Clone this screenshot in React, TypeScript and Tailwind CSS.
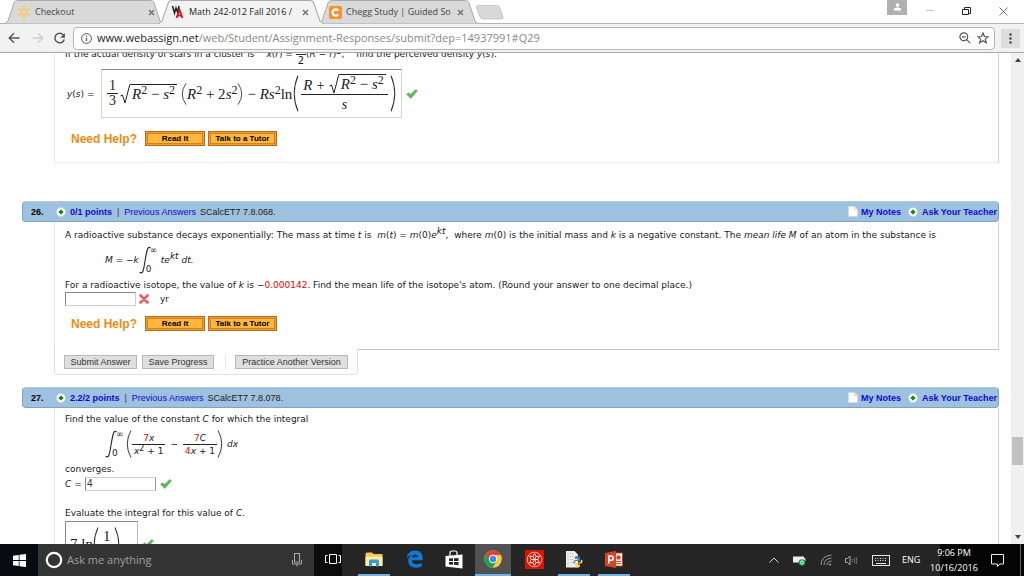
import type { ReactNode } from "react";

function Tab({ icon, title, size, active, label }: { icon: ReactNode; title: string; size: string; active?: boolean; label: string }) {
  return (
    <div className={`relative -ml-1 flex h-full shrink-0 items-center ${size} ${active ? "z-10" : ""}`}>
      <svg className="absolute inset-0 h-full w-full" viewBox="0 0 160 24" preserveAspectRatio="none" aria-hidden="true">
        <path d="M0 24 L3 21 L9 3 Q10 0.5 13 0.5 L147 0.5 Q150 0.5 151 3 L157 21 L160 24 Z" fill={active ? "#f2f2f2" : "#d9d9d9"} stroke="#a9a9a9" strokeWidth="1" />
        {active && <path d="M1 23.6 H159" stroke="#f2f2f2" strokeWidth="2" />}
      </svg>
      <button role="tab" aria-selected={!!active} className="relative flex min-w-0 flex-1 items-center gap-1 text-left">
        {icon}
        <span className={`whitespace-nowrap text-[9px] leading-4 ${active ? "text-[#222]" : "text-[#444]"}`}>{title}</span>
      </button>
      <button aria-label={label} className="relative ml-1">
        <svg width="7" height="7" viewBox="0 0 7 7"><path d="M1 1 L6 6 M6 1 L1 6" stroke="#666" strokeWidth="1.1" /></svg>
      </button>
    </div>
  );
}

function Spark() {
  return (
    <svg className="shrink-0" width="14" height="14" viewBox="0 0 14 14" stroke="#fdc85c" strokeWidth="1.9" strokeLinecap="round">
      <path d="M7 1 V4.6 M7 9.4 V13 M1.8 4 L4.9 5.8 M9.1 8.2 L12.2 10 M1.8 10 L4.9 8.2 M9.1 5.8 L12.2 4" />
    </svg>
  );
}

function WaLogo() {
  return (
    <svg className="shrink-0" width="14" height="14" viewBox="0 0 14 14" fill="none">
      <path d="M1.500 1 L3.500 8 L5 3 L6.500 7 L8 1" stroke="#222" strokeWidth="1.5" />
      <path d="M5.500 13 L8.500 5 L11.500 13 M6.800 10.6 H10.500" stroke="#cf1420" strokeWidth="1.9" />
    </svg>
  );
}

function CheggLogo() {
  return (
    <svg className="shrink-0" width="13" height="13" viewBox="0 0 13 13">
      <rect width="13" height="13" rx="2" fill="#f59331" />
      <path d="M9.3 4.6 A3.2 3.2 0 1 0 9.3 8.4" stroke="#fff" strokeWidth="2.3" fill="none" />
    </svg>
  );
}

function TabStrip() {
  return (
    <header className="relative flex h-6 shrink-0 items-start bg-white pl-[9px]">
      <div className="absolute inset-x-0 bottom-0 h-px bg-[#b4b4b4]" />
      <div role="tablist" className="flex h-full">
        <Tab icon={<Spark />} title="Checkout" size="w-[158px] pl-3 pr-2" label="Close Checkout" />
        <Tab icon={<WaLogo />} title="Math 242-012 Fall 2016 /" size="w-[164px] pl-3 pr-[14px]" active label="Close Math" />
        <Tab icon={<CheggLogo />} title="Chegg Study | Guided So" size="w-[159px] pl-[10px] pr-[14px]" label="Close Chegg" />
      </div>
      <button aria-label="New tab" className="-ml-0.5 mt-[5px]">
        <svg width="28" height="15" viewBox="0 0 28 15"><path d="M2 .5 H21 Q23 .5 24 3 L27 12 Q27.500 14 25 14 H7 Q5 14 4 12 L.6 3 Q0 .5 2 .5Z" fill="#d8d8d8" stroke="#c2c2c2" strokeWidth=".8" /></svg>
      </button>
      <div className="ml-auto flex h-full items-start pr-4">
        <button aria-label="Profile" className="mr-[19px] flex h-[15px] w-5 justify-center bg-[#b0b0b0] pt-[3px]">
          <svg width="7" height="8" viewBox="0 0 7 8" fill="#fff"><circle cx="3.500" cy="2" r="1.8" /><path d="M0 7.500 V6 Q0 4.500 3.500 4.500 T7 6 V7.500Z" /></svg>
        </button>
        <button aria-label="Minimize" className="mr-[28px] mt-[10px]"><svg width="8" height="2"><path d="M0 .5 H8" stroke="#c4c4c4" /></svg></button>
        <button aria-label="Restore" className="mr-[28px] mt-[7px]">
          <svg width="9" height="9" viewBox="0 0 9 9" fill="none" stroke="#222"><path d="M.5 2.500 H6.500 V7.500 H.5Z M2.500 2 V.5 H8.500 V6.500 H7" /></svg>
        </button>
        <button aria-label="Close window" className="mt-[7px]"><svg width="9" height="9" viewBox="0 0 9 9"><path d="M.5 .5 L8.500 8.500 M8.500 .5 L.5 8.500" stroke="#777" /></svg></button>
      </div>
    </header>
  );
}

function Toolbar() {
  return (
    <div className="flex h-[29px] shrink-0 items-center border-b border-[#a8a8a8] bg-[#f2f2f2] pl-2 pr-1">
      <button aria-label="Back" className="w-6"><svg width="12" height="12" viewBox="0 0 12 12" fill="none" stroke="#555" strokeWidth="1.4"><path d="M11.500 6 H1.500 M6 1.200 L1.200 6 L6 10.800" /></svg></button>
      <button aria-label="Forward" className="w-[21px]"><svg width="12" height="12" viewBox="0 0 12 12" fill="none" stroke="#d0d0d0" strokeWidth="1.4"><path d="M.5 6 H10.500 M6 1.200 L10.800 6 L6 10.800" /></svg></button>
      <button aria-label="Reload" className="w-5"><svg width="13" height="13" viewBox="0 0 13 13" fill="none"><path d="M10.600 3.200 A4.800 4.800 0 1 0 11.300 7.500" stroke="#555" strokeWidth="1.5" /><path d="M11.900 1 V5.700 H7.200Z" fill="#555" /></svg></button>
      <div className="flex h-[23px] min-w-0 flex-1 items-center rounded-sm border border-[#b4b4b4] bg-white pl-[7px] pr-[5px]">
        <svg className="shrink-0" width="11" height="11" viewBox="0 0 11 11" fill="none" stroke="#555"><circle cx="5.500" cy="5.500" r="4.900" /><path d="M5.500 4.800 V8.300 M5.500 2.500 V3.700" strokeWidth="1.200" /></svg>
        <div className="ml-[5px] min-w-0 flex-1 whitespace-nowrap text-[11px] leading-4 text-[#888]"><span className="text-[#222]">www.webassign.net</span>/web/Student/Assignment-Responses/submit?dep=14937991#Q29</div>
        <button aria-label="Zoom"><svg width="12" height="12" viewBox="0 0 12 12" fill="none" stroke="#555" strokeWidth="1.200"><circle cx="4.800" cy="4.800" r="3.900" /><path d="M7.700 7.700 L11.200 11.200 M3 4.800 H6.600" /></svg></button>
        <button aria-label="Bookmark" className="ml-[6px]"><svg width="12" height="12" viewBox="0 0 12 12" fill="none" stroke="#555" strokeWidth="1.200"><path d="M6 1 L7.400 4.500 L11.200 4.700 L8.300 7.100 L9.300 10.800 L6 8.700 L2.700 10.800 L3.700 7.100 L.8 4.700 L4.600 4.500Z" /></svg></button>
      </div>
      <button aria-label="Menu" className="ml-[6px] flex h-[19px] w-[19px] items-center justify-center bg-[#dedede]"><svg width="3" height="11" viewBox="0 0 3 11" fill="#444"><circle cx="1.500" cy="1.500" r="1.200" /><circle cx="1.500" cy="5.500" r="1.200" /><circle cx="1.500" cy="9.500" r="1.200" /></svg></button>
    </div>
  );
}

function Check() {
  return <svg className="shrink-0" width="12" height="10" viewBox="0 0 12 10" role="img" aria-label="Correct"><path d="M.6 5.300 L2.800 3.700 L4.500 5.500 L9.800 .5 L11.500 1.800 L4.800 9.500Z" fill="#5fba5f" stroke="#4a9e4b" strokeWidth=".5" /></svg>;
}

function Cross() {
  return <svg className="shrink-0" width="10" height="10" viewBox="0 0 10 10" role="img" aria-label="Incorrect"><path d="M1.500 1.500 L8.500 8.500 M8.500 1.500 L1.500 8.500" stroke="#f35a5a" strokeWidth="2.600" strokeLinecap="round" /></svg>;
}

function NeedHelp() {
  const cls = "h-[15px] border border-[#b86a1a] bg-[#ffb83d] font-bold text-[8px] leading-[9px] text-black shadow-[inset_0_0_0_1px_#f79a2c,inset_0_0_0_2px_#cf8222] font-['Liberation_Sans',sans-serif]";
  return (
    <div className="ml-[6px] flex h-[15px] items-center">
      <span className="w-[74px] font-['Liberation_Sans',sans-serif] text-[12px] font-bold leading-4 text-[#f08a14]">Need Help?</span>
      <button className={`w-[60px] ${cls}`}>Read It</button>
      <button className={`ml-[3px] w-[69px] ${cls}`}>Talk to a Tutor</button>
    </div>
  );
}

function Plus() {
  return <svg className="shrink-0" width="10" height="10" viewBox="0 0 10 10" aria-hidden="true"><circle cx="5" cy="5" r="4.500" fill="#fff" stroke="#c6d2d8" strokeWidth=".7" /><path d="M5 2.800 V7.200 M2.800 5 H7.200" stroke="#0a8a0a" strokeWidth="1.800" /></svg>;
}

function QuestionHeader({ num, points, code }: { num: string; points: string; code: string }) {
  return (
    <div className="flex h-[21px] items-center rounded-sm border border-[#7fa3c0] border-t-[#b4c8d8] bg-[#9dc1de] pl-2 pr-px font-['Liberation_Sans',sans-serif] text-[9px] leading-3 whitespace-nowrap text-[#0b0bd0]">
      <h2 className="w-[25px] font-bold text-black">{num}</h2>
      <Plus />
      <a href="#points" className="ml-1 font-bold">{points}</a>
      <span className="mx-[5px] text-[#551a8b]">|</span>
      <a href="#previous">Previous Answers</a>
      <span className="ml-1 text-[#222]">{code}</span>
      <div className="ml-auto flex items-center font-bold">
        <svg width="10" height="11" viewBox="0 0 10 11" aria-hidden="true"><path d="M.5 .5 H6.500 L9.500 3.500 V10.500 H.5Z" fill="#fff" stroke="#d4dbe0" strokeWidth=".8" /><path d="M6.500 .5 V3.500 H9.500" fill="#e8e8e8" stroke="#ccc" strokeWidth=".6" /></svg>
        <a href="#notes" className="ml-[3px] mr-[7px]">My Notes</a>
        <Plus />
        <a href="#teacher" className="ml-1">Ask Your Teacher</a>
      </div>
    </div>
  );
}

function Paren({ right, height }: { right?: boolean; height: string }) {
  return (
    <svg className={`w-[6px] shrink-0 ${height}`} viewBox="0 0 6 30" preserveAspectRatio="none" role="img" aria-label={right ? ")" : "("}>
      <path d={right ? "M1 .5 Q8.500 15 1 29.500" : "M5 .5 Q-2.500 15 5 29.500"} fill="none" stroke="#333" strokeWidth="1" />
    </svg>
  );
}

function Sqrt({ children }: { children: ReactNode }) {
  return (
    <span className="flex items-stretch">
      <svg className="w-[10px]" viewBox="0 0 10 20" preserveAspectRatio="none" aria-hidden="true"><path d="M.5 12 L2.500 11 L5 19 L9.800 .5" fill="none" stroke="#222" strokeWidth="1" /></svg>
      <span className="border-t border-[#222] px-[2px]">{children}</span>
    </span>
  );
}

function Frac({ top, bottom, wide }: { top: ReactNode; bottom: ReactNode; wide?: boolean }) {
  return (
    <span className="flex flex-col items-center">
      <span className={`flex justify-center self-stretch border-b border-[#222] ${wide ? "px-1" : "px-[2px]"}`}>{top}</span>
      <span className={wide ? "px-[2px]" : ""}>{bottom}</span>
    </span>
  );
}

function Sup({ children }: { children: ReactNode }) {
  return <sup className="relative -top-[5px] align-baseline text-[12px] leading-none not-italic">{children}</sup>;
}

function Integral() {
  return (
    <span className="flex h-[28px] items-stretch">
      <svg width="12" height="28" viewBox="0 0 12 28" role="img" aria-label="Integral"><path d="M11.500 2 Q9.500 0 8.200 4 Q7 9 6 15 Q5 22 4 25 Q2.800 28 .7 26.300" fill="none" stroke="#222" strokeWidth="1.100" /></svg>
      <span className="-ml-1 flex w-3 flex-col justify-between text-[9px] leading-[9px]"><span className="ml-[3px]">∞</span><span className="-ml-px">0</span></span>
    </span>
  );
}

function Question25() {
  return (
    <article className="ml-8 border-x border-b border-[#ececec] border-r-[#d2d2d2] pb-4 pl-[10px]">
      <div className="-mt-[10px] flex h-[22px] items-center whitespace-nowrap">
        <span>If the actual density of stars in a cluster is</span>
        <span className="ml-3"><i>x</i>(<i>r</i>) =&nbsp;</span>
        <span className="text-[10px] leading-[12px]"><Frac top="1" bottom="2" /></span>
        <span>(<i>R</i> − <i>r</i>)<sup className="relative -top-[3px] align-baseline text-[8px] leading-none">2</sup>,</span>
        <span className="ml-3">find the perceived density <i>y</i>(<i>s</i>).</span>
      </div>
      <div className="mt-1 flex items-center">
        <span className="w-9 pl-[2px] whitespace-nowrap"><i>y</i>(<i>s</i>) =</span>
        <div className="flex h-[49px] w-[301px] items-center border border-[#d4d4d4] border-t-[#888] pl-[5px] font-['Liberation_Serif',serif] text-[15px] leading-[18px] whitespace-nowrap text-[#222]">
          <span className="text-[14px] leading-[14px]"><Frac top="1" bottom="3" /></span>
          <span className="ml-[2px]"><Sqrt><i>R</i><Sup>2</Sup> − <i>s</i><Sup>2</Sup></Sqrt></span>
          <span className="ml-1 flex items-center"><Paren height="h-[22px]" /><span><i>R</i><Sup>2</Sup> + 2<i>s</i><Sup>2</Sup></span><Paren right height="h-[22px]" /></span>
          <span className="ml-1">− <i>Rs</i><Sup>2</Sup>ln</span>
          <span className="ml-px flex items-center gap-[2px]">
            <Paren height="h-[37px]" />
            <Frac top={<><span className="mr-1 pt-[2px]"><i>R</i> +</span><Sqrt><i>R</i><Sup>2</Sup> − <i>s</i><Sup>2</Sup></Sqrt></>} bottom={<i className="text-[14px] leading-[14px]">s</i>} />
            <Paren right height="h-[37px]" />
          </span>
        </div>
        <span className="ml-1"><Check /></span>
      </div>
      <div className="mt-[13px]"><NeedHelp /></div>
    </article>
  );
}

function Question26() {
  const button = "h-[14px] border border-[#b9b9b9] bg-[#dfdfdf] font-['Liberation_Sans',sans-serif] text-[9px] leading-3 text-[#333] whitespace-nowrap";
  return (
    <article className="mt-[38px]">
      <QuestionHeader num="26." points="0/1 points" code="SCalcET7 7.8.068." />
      <div className="ml-8 border-x border-[#e4e4e4] border-r-[#d2d2d2] pb-[18px] pl-[10px] pt-[6px]">
        <p className="whitespace-nowrap">A radioactive substance decays exponentially: The mass at time <i>t</i> is &nbsp;<i>m</i>(<i>t</i>) = <i>m</i>(0)<i>e</i><sup className="relative -top-1 align-baseline text-[9px] leading-none italic">kt</sup>, &nbsp;where <i>m</i>(0) is the initial mass and <i>k</i> is a negative constant. The <i>mean life M</i> of an atom in the substance is</p>
        <div className="mt-1 flex h-7 items-center pl-10">
          <span><i>M</i> = −<i>k</i></span><Integral />
          <i className="ml-[2px]">te<sup className="relative -top-1 align-baseline text-[9px] leading-none">kt</sup> dt.</i>
        </div>
        <p className="mt-1">For a radioactive isotope, the value of <i>k</i> is −<span className="text-[#f00000]">0.000142</span>. Find the mean life of the isotope's atom. (Round your answer to one decimal place.)</p>
        <div className="flex h-[14px] items-center">
          <input aria-label="Mean life in years" className="h-[14px] w-[71px] border border-[#d0d0d0] border-l-[#888] border-t-[#888] bg-white px-px" />
          <span className="ml-[3px]"><Cross /></span><span className="ml-[11px]">yr</span>
        </div>
        <div className="mt-[10px]"><NeedHelp /></div>
      </div>
      <div className="ml-8 flex">
        <div className="flex h-[26px] items-start rounded-b border-x border-b border-[#e0e0e0] pl-[9px] pr-[9px] pt-[6px]">
          <button className={`w-[73px] ${button}`}>Submit Answer</button>
          <button className={`ml-[5px] w-[72px] ${button}`}>Save Progress</button>
          <span className="ml-[11px] h-[14px] border-l border-[#e4e4e4]" />
          <button className={`ml-[9px] w-[113px] ${button}`}>Practice Another Version</button>
        </div>
        <div className="h-px flex-1 bg-[#c6c6c6]" />
      </div>
    </article>
  );
}

function Question27() {
  return (
    <article className="mt-3">
      <QuestionHeader num="27." points="2.2/2 points" code="SCalcET7 7.8.078." />
      <div className="ml-8 border-x border-[#e4e4e4] border-r-[#d2d2d2] pb-8 pl-[10px] pt-1">
        <p>Find the value of the constant <i>C</i> for which the integral</p>
        <div className="mt-1 flex h-7 items-center pl-10 leading-3 whitespace-nowrap">
          <Integral />
          <span className="ml-px flex"><Paren height="h-7" /></span>
          <Frac wide top={<span><span className="text-[#f00000]">7</span><i>x</i></span>} bottom={<><i>x</i><sup className="relative -top-[3px] align-baseline text-[8px] leading-none">2</sup> + 1</>} />
          <span className="mx-[5px]">−</span>
          <Frac wide top={<span className="text-[#f00000]">7<i className="text-[#222]">C</i></span>} bottom={<><span className="text-[#f00000]">4</span><i>x</i> + 1</>} />
          <Paren right height="h-7" />
          <i className="ml-1">dx</i>
        </div>
        <p className="mt-1">converges.</p>
        <div className="mt-px flex h-[14px] items-center">
          <label htmlFor="answer-c" className="w-5"><i>C</i> =</label>
          <input id="answer-c" defaultValue="4" className="h-[14px] w-[71px] border border-[#d0d0d0] border-l-[#888] border-r-[#999] bg-white px-px font-['Liberation_Sans',sans-serif] text-[10px] text-[#333]" />
          <span className="ml-1"><Check /></span>
        </div>
        <p className="mt-[15px]">Evaluate the integral for this value of <i>C</i>.</p>
        <div className="mt-px flex items-center">
          <div className="flex h-[46px] w-[73px] items-center border border-[#bbb] border-l-[#888] border-t-[#888] pl-1 font-['Liberation_Serif',serif] text-[15px] leading-4 text-[#222]">
            <span>7 ln</span><Paren height="h-[34px]" /><Frac wide top="1" bottom="4" /><Paren right height="h-[34px]" />
          </div>
          <span className="ml-1"><Check /></span>
        </div>
      </div>
    </article>
  );
}

function Scrollbar() {
  return (
    <div className="flex w-[13px] shrink-0 flex-col items-center bg-[#f0f0f0]" aria-hidden="true">
      <svg className="mt-[5px]" width="6" height="4"><path d="M0 4 L3 0 L6 4Z" fill="#444" /></svg>
      <div className="grow-[375]" />
      <div className="h-7 w-[11px] bg-[#c1c1c1]" />
      <div className="grow-[70]" />
      <svg className="mb-[5px]" width="6" height="4"><path d="M0 0 L3 4 L6 0Z" fill="#444" /></svg>
    </div>
  );
}

function TaskItem({ label, active, open, width, children }: { label: string; active?: boolean; open?: boolean; width: string; children: ReactNode }) {
  return (
    <button aria-label={label} className={`flex h-full shrink-0 items-center justify-center border-b-2 ${width} ${active ? "bg-[#525252]" : ""} ${open ? "border-[#76b0dc]" : "border-transparent"}`}>
      {children}
    </button>
  );
}

function Taskbar() {
  return (
    <footer className="flex h-8 shrink-0 items-stretch bg-[#252525] text-white">
      <button aria-label="Start" className="flex w-[38px] items-center justify-center bg-[#080b0f]">
        <svg width="13" height="13" viewBox="0 0 13 13" fill="#fff"><path d="M0 1.700 L5.700 .9 V6.100 H0Z M6.500 .8 L13 0 V6.100 H6.500Z M0 6.900 H5.700 V12.100 L0 11.300Z M6.500 6.900 H13 V13 L6.500 12.200Z" /></svg>
      </button>
      <label className="flex w-[276px] items-center bg-[#343434] pl-[7px] pr-3">
        <svg width="18" height="18" viewBox="0 0 18 18"><circle cx="9" cy="9" r="7.200" fill="none" stroke="#fff" strokeWidth="2.200" /></svg>
        <input aria-label="Search" placeholder="Ask me anything" className="ml-1 w-0 flex-1 bg-transparent text-[11px] leading-4 text-white placeholder:text-[#a0a0a0]" />
        <svg width="10" height="14" viewBox="0 0 10 14" fill="none" stroke="#aaa"><rect x="2.500" y=".5" width="5" height="8.500" /><path d="M.5 7 V11 H9.500 V7 M5 11 V13.500" /></svg>
      </label>
      <div className="flex h-full">
        <div className="flex w-7 bg-[#0c0c0c]">
          <TaskItem label="Task view" width="w-[38px]">
            <svg width="16" height="10" viewBox="0 0 16 10" fill="none" stroke="#fff"><path d="M4.500 .5 H11.500 V9.500 H4.500Z M2.500 1.500 H.5 V8.500 H2.500 M13.500 1.500 H15.500 V8.500 H13.500" /></svg>
          </TaskItem>
        </div>
        <span className="w-4" />
        <TaskItem label="File Explorer" open width="w-8">
          <svg width="18" height="15" viewBox="0 0 18 15"><path d="M.5 2 Q.5 .5 2 .5 H7 L8.500 2 H17.500 V13 H.5Z" fill="#f6c85c" /><path d="M.5 4.500 H17.500 V14 H.5Z" fill="#ffe9a6" /><path d="M4 14.500 V9 Q4 7.500 5.500 7.500 H12.500 Q14 7.500 14 9 V14.500 H11 V11 H7 V14.500Z" fill="#3598db" /></svg>
        </TaskItem>
        <span className="w-2" />
        <TaskItem label="Edge" width="w-8">
          <svg width="17" height="18" viewBox="0 0 17 18"><path d="M.5 8.500 Q2 .5 9 .5 Q16.500 .7 16.500 8 V10.300 H5.800 Q6 14.200 10.500 14.200 Q13.500 14.200 15.700 12.900 V16.400 Q13.300 17.700 10 17.700 Q2.200 17.500 2.200 10.500 Q2.200 7 5.700 4.800 Q2.800 5 .5 8.500Z M5.900 7.200 H11.900 Q11.800 4.400 9.100 4.400 Q6.400 4.400 5.900 7.200Z" fill="#0c7bd9" fillRule="evenodd" /></svg>
        </TaskItem>
        <span className="w-2" />
        <TaskItem label="Store" width="w-8">
          <svg width="18" height="19" viewBox="0 0 18 19"><path d="M.5 6 L17.500 4.500 V18.500 L.5 16.500Z" fill="#fff" /><path d="M5 6 V3 Q5 1 7 1 H10 Q12 1 12 3 V5" fill="none" stroke="#fff" strokeWidth="1.200" /><path d="M4 8.600 L8 8.300 V11 H4Z M9 8.200 L13.500 7.900 V11 H9Z M4 12 H8 V14.700 L4 14.400Z M9 12 H13.500 V15.200 L9 14.800Z" fill="#252525" /></svg>
        </TaskItem>
        <span className="w-[5px]" />
        <TaskItem label="Chrome" active open width="w-9">
          <svg width="18" height="18" viewBox="0 0 18 18"><circle cx="9" cy="9" r="8.800" fill="#f7cd2e" /><path d="M1.400 4.500 A8.800 8.800 0 0 0 8.500 17.800 L12.700 11 L9 9Z" fill="#1fa05a" /><path d="M1.400 4.500 A8.800 8.800 0 0 1 16.800 5 H9 L5.500 11Z" fill="#dc4437" /><circle cx="9" cy="9" r="4.200" fill="#fff" /><circle cx="9" cy="9" r="3.200" fill="#4486f5" /></svg>
        </TaskItem>
        <span className="w-[7px]" />
        <TaskItem label="Mathematica" width="w-8">
          <svg width="19" height="19" viewBox="0 0 19 19"><rect width="19" height="19" fill="#dd1100" /><circle cx="9.500" cy="9.500" r="7.300" fill="none" stroke="#f6c2bd" /><path d="M9.500 3.500 L11 6.500 L14.500 6 L12.800 9.500 L14.500 13 L11 12.500 L9.500 15.500 L8 12.500 L4.500 13 L6.200 9.500 L4.500 6 L8 6.500Z M6.200 9.500 H12.800 M8 6.500 L11 12.500 M11 6.500 L8 12.500" fill="none" stroke="#fff" strokeWidth=".9" /></svg>
        </TaskItem>
        <span className="w-2" />
        <TaskItem label="Python editor" open width="w-8">
          <svg width="18" height="19" viewBox="0 0 18 19"><path d="M1 1 H9.500 L13 4.500 V17.500 H1Z" fill="#eee" /><path d="M3 3 V16 M5 3.500 H9 M5 6.500 H10 M5 9.500 H9 M5 12.500 H8" stroke="#aaa" strokeWidth=".8" strokeDasharray="1 1" /><path d="M8.500 12 Q8.500 10 10.500 10 H12.500 V9 H10 V7.500 Q10 6 12.300 6 Q15 6 15 7.700 V11 H11 Q9.500 11 9.500 14 Q8 14 8.500 12Z" fill="#3f7fb5" /><path d="M17.500 11 Q17.500 13.500 15.500 13.500 H13 V14.500 H15 V16 Q15 17.500 12.500 17.500 Q10.300 17.500 10.300 15.800 V12.500 H14.500 Q16 12.200 16 9.700 Q17.500 9.500 17.500 11Z" fill="#ffd94b" /></svg>
        </TaskItem>
        <span className="w-2" />
        <TaskItem label="PowerPoint" open width="w-8">
          <svg width="18" height="17" viewBox="0 0 18 17"><rect x="9" y="2" width="8.500" height="13" fill="#fff" stroke="#c83f20" /><path d="M11 10.500 H16 M11 12.500 H16" stroke="#d24625" /><circle cx="13.500" cy="6.500" r="2.200" fill="#d24625" /><path d="M0 2 L11 0 V17 L0 15Z" fill="#d24625" /><path d="M3.900 12.500 V5 H6 Q8.200 5 8.200 7.200 Q8.200 9.300 6 9.300 H4" stroke="#fff" strokeWidth="1.500" fill="none" /></svg>
        </TaskItem>
      </div>
      <div className="ml-auto flex items-center">
        <button aria-label="Show hidden icons"><svg width="10" height="6" viewBox="0 0 10 6"><path d="M.5 5.500 L5 1 L9.500 5.500" fill="none" stroke="#ddd" /></svg></button>
        <svg className="ml-[14px]" width="13" height="11" viewBox="0 0 13 11"><rect x="0" y="1.500" width="11" height="6" fill="#eee" /><rect x="11" y="3" width="1.500" height="3" fill="#ccc" /><circle cx="9" cy="7.500" r="3.300" fill="#169a32" /><circle cx="9" cy="7.500" r="1.500" fill="none" stroke="#fff" /></svg>
        <svg className="ml-[14px]" width="12" height="12" viewBox="0 0 12 12" fill="none" stroke="#999"><path d="M1 11 Q1 2 11.500 1 M4 11 Q4 5 11.500 4 M7 11 Q7 7.500 11.500 7" /><circle cx="10" cy="10.500" r=".8" /></svg>
        <svg className="ml-[13px]" width="13" height="11" viewBox="0 0 13 11" fill="none" stroke="#aaa"><path d="M.5 3.500 H2.500 L5 1 V10 L2.500 7.500 H.5Z" /><path d="M7 4 Q8 5.500 7 7 M9 3 Q10.500 5.500 9 8 M11 2 Q13 5.500 11 9" stroke="#777" /></svg>
        <svg className="ml-[14px]" width="18" height="11" viewBox="0 0 18 11" fill="none" stroke="#e6e6e6"><rect x=".5" y=".5" width="17" height="10" /><path d="M3 3.500 H15 M3 5.500 H15" strokeDasharray="1 1.500" /><path d="M4 8.500 H14" /></svg>
        <span className="ml-3 w-6 text-[9px]">ENG</span>
        <div className="flex h-full bg-linear-[90deg,transparent_14px,#050505_14px]">
          <time className="flex h-full w-[56px] flex-col justify-center text-center text-[9px] leading-[15px] whitespace-nowrap"><span>9:06 PM</span><span>10/16/2016</span></time>
          <div className="flex h-full w-[42px] items-center pl-[9px]">
            <button aria-label="Notifications"><svg width="13" height="13" viewBox="0 0 13 13"><path d="M.5 .5 H12.500 V10 H9 L6.500 12.500 V10 H.5Z" fill="none" stroke="#eee" /></svg></button>
            <span className="ml-auto mr-[3px] h-full border-l border-[#666]" />
          </div>
        </div>
      </div>
    </footer>
  );
}

export default function App() {
  return (
    <div className="flex h-screen flex-col overflow-hidden bg-white font-['Open_Sans',sans-serif]">
      <TabStrip />
      <Toolbar />
      <div className="flex min-h-0 flex-1">
        <main className="min-w-0 flex-1 overflow-hidden pl-[22px] pr-3 font-['DejaVu_Sans',Verdana,sans-serif] text-[9px] leading-[14px] text-[#1a1a1a]">
          <Question25 />
          <Question26 />
          <Question27 />
        </main>
        <Scrollbar />
      </div>
      <Taskbar />
    </div>
  );
}
